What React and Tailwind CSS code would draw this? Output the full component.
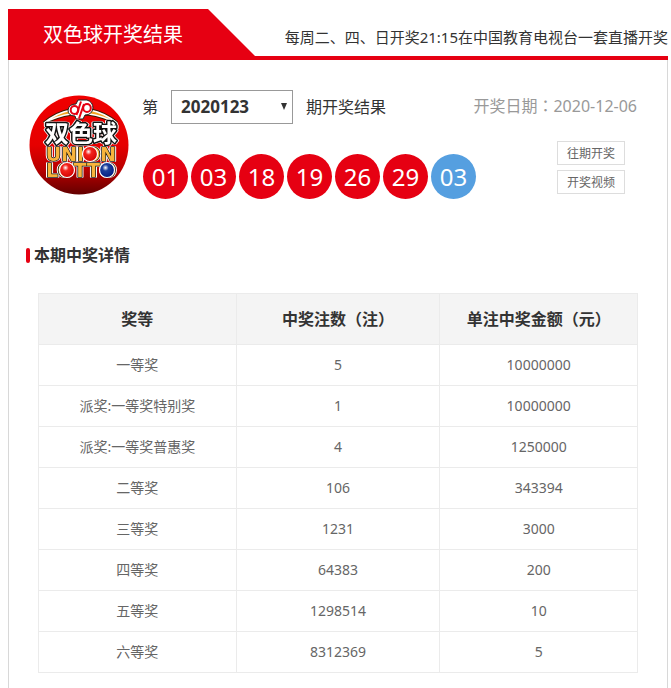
import React, { useState } from 'react';

const issues = ['2020123', '2020122', '2020121', '2020120'];
const redBalls = ['01', '03', '18', '19', '26', '29'];
const blueBall = '03';

const prizes = [
    { level: '一等奖', count: 5, amount: 10000000 },
    { level: '派奖:一等奖特别奖', count: 1, amount: 10000000 },
    { level: '派奖:一等奖普惠奖', count: 4, amount: 1250000 },
    { level: '二等奖', count: 106, amount: 343394 },
    { level: '三等奖', count: 1231, amount: 3000 },
    { level: '四等奖', count: 64383, amount: 200 },
    { level: '五等奖', count: 1298514, amount: 10 },
    { level: '六等奖', count: 8312369, amount: 5 },
];

const LottoLogo = () => (
    <svg viewBox="0 0 100 100" className="h-[100px] w-[100px] shrink-0" role="img" aria-label="双色球">
        <defs>
            <linearGradient id="disc" x1="0" y1="0" x2="0" y2="1">
                <stop offset="0" stopColor="#f00000" />
                <stop offset="0.5" stopColor="#e60000" />
                <stop offset="0.75" stopColor="#b80000" />
                <stop offset="1" stopColor="#640000" />
            </linearGradient>
            <radialGradient id="redBall" cx="0.4" cy="0.35" r="0.7">
                <stop offset="0" stopColor="#ffffff" />
                <stop offset="0.3" stopColor="#f4231c" />
                <stop offset="1" stopColor="#d00000" />
            </radialGradient>
            <radialGradient id="blueBall" cx="0.4" cy="0.35" r="0.7">
                <stop offset="0" stopColor="#ffffff" />
                <stop offset="0.3" stopColor="#1c3f9c" />
                <stop offset="1" stopColor="#001a7e" />
            </radialGradient>
        </defs>
        <circle cx="50" cy="50" r="49.5" fill="url(#disc)" />

        {/* arch */}
        <path d="M15 28 Q27 18 42 15 L61 15 Q76 18 88 28 Q74 21 60 19 L42 19 Q28 21 15 28Z" fill="#f5a623" stroke="#3a1a00" strokeWidth="3.5" />
        <path d="M15 28 Q27 18 42 15 L61 15 Q76 18 88 28 Q74 21 60 19 L42 19 Q28 21 15 28Z" fill="#f5a623" stroke="#fff" strokeWidth="1.6" />

        {/* emblem */}
        <path d="M49 5 H58 Q64 7 64 13 Q63 20 56 20 L54 24 H47 L46 21 Q39 21 39 15 Q40 9 47 9Z" fill="#fff" stroke="#222" strokeWidth="1" />
        <g fill="none" stroke="#e60012" strokeWidth="2">
            <path d="M52 6.5 L47.500 20 M55 9 L50 23.500" />
            <ellipse cx="45.5" cy="15" rx="3.8" ry="4" />
            <ellipse cx="58" cy="13" rx="3.800" ry="4" />
        </g>

        {/* lettering with a white rim around the dark outline */}
        <g
            fontWeight="700"
            textAnchor="middle"
            strokeLinejoin="round"
            stroke="#111"
            className="[filter:drop-shadow(1px_0_0_#fff)_drop-shadow(-1px_0_0_#fff)]"
        >
            <text x="52" y="47" fontSize="24" fontFamily="Noto Sans CJK SC, sans-serif" fill="#fff" strokeWidth="3" paintOrder="stroke">双色球</text>
            <g fontSize="19" fontFamily="DejaVu Sans, sans-serif" fill="#f7b43c" strokeWidth="1.5" paintOrder="stroke">
                <text x="52" y="66">UNION</text>
                <text x="52" y="82">LOTTO</text>
            </g>
        </g>
        <g stroke="#fff" strokeWidth="1.2">
            <circle cx="61" cy="59" r="7.5" fill="url(#redBall)" />
            <circle cx="38" cy="75" r="7.5" fill="url(#redBall)" />
            <circle cx="78" cy="75" r="7.5" fill="url(#blueBall)" />
        </g>
    </svg>
);

const Ball = ({ value, blue }) => (
    <li className={`flex h-[45px] w-[45px] items-center justify-center rounded-full text-2xl text-white ${blue ? 'bg-[#559fe0]' : 'bg-[#e60012]'}`}>
        {value}
    </li>
);

const App = () => {
    const [issue, setIssue] = useState(issues[0]);

    return (
        <div className="min-h-screen bg-white pt-[9px] pr-[3px] pl-2 font-['Noto_Sans','Noto_Sans_CJK_SC',sans-serif] text-[#333]">
            <header className="flex h-[51px] items-stretch border-b-4 border-[#e60012]">
                <h1 className="w-[247px] shrink-0 bg-[#e60012] pt-3 pl-[35px] text-xl leading-7 text-white [clip-path:polygon(0_0,200px_0,100%_100%,0_100%)]">
                    双色球开奖结果
                </h1>
                <p className="ml-auto pt-[18px] text-[15px] leading-5 whitespace-nowrap">
                    每周二、四、日开奖21:15在中国教育电视台一套直播开奖
                </p>
            </header>

            <main className="min-h-[calc(100vh-60px)] border-x border-[#d8d8d8] pt-[30px] pb-4">
                <section className="flex pr-[30px] pl-5">
                    <div className="pt-[5px]">
                        <LottoLogo />
                    </div>
                    <div className="ml-[13px] flex-1">
                        <div className="flex h-[34px] items-center">
                            <label htmlFor="issue">第</label>
                            <div className="relative mx-[13px]">
                                <select
                                    id="issue"
                                    value={issue}
                                    onChange={e => setIssue(e.target.value)}
                                    className="h-[34px] w-[122px] appearance-none border border-[#999] bg-white pl-[9px] text-[17px] font-bold"
                                >
                                    {issues.map(item => (
                                        <option key={item} value={item}>{item}</option>
                                    ))}
                                </select>
                                <span className="pointer-events-none absolute top-[13px] right-[6px] h-[7px] w-[6px] bg-[#333] [clip-path:polygon(0_0,100%_0,50%_100%)]"></span>
                            </div>
                            <span>期开奖结果</span>
                            <p className="ml-auto pb-1 whitespace-nowrap text-[#999]">
                                开奖日期<span className="font-['Noto_Sans_CJK_TC',sans-serif]">：</span>2020-12-06
                            </p>
                        </div>
                        <div className="mt-[17px] flex items-start justify-between">
                            <ul className="mt-[13px] ml-px flex gap-[3px]">
                                {redBalls.map(n => <Ball key={n} value={n} />)}
                                <Ball value={blueBall} blue />
                            </ul>
                            <div className="mr-3 flex flex-col gap-[5px] text-xs text-[#666]">
                                <a href="#history" className="flex h-6 w-[68px] items-center justify-center border border-[#ddd] pt-px">往期开奖</a>
                                <a href="#video" className="flex h-6 w-[68px] items-center justify-center border border-[#ddd] pt-px">开奖视频</a>
                            </div>
                        </div>
                    </div>
                </section>

                <section className="mt-11 px-[29px]">
                    <h2 className="-ml-3 flex items-center gap-1 text-base leading-6 font-bold">
                        <span className="h-[15px] w-1 rounded-sm bg-[#e60012]"></span>
                        本期中奖详情
                    </h2>
                    <table className="mt-[26px] w-full table-fixed border-collapse text-center">
                        <thead>
                            <tr className="h-[51px] bg-[#f4f4f4] text-base">
                                <th className="w-[33%] border border-[#ebebeb]">奖等</th>
                                <th className="w-[34%] border border-[#ebebeb]">中奖注数（注）</th>
                                <th className="w-[33%] border border-[#ebebeb]">单注中奖金额（元）</th>
                            </tr>
                        </thead>
                        <tbody className="text-sm text-[#666]">
                            {prizes.map(prize => (
                                <tr key={prize.level} className="h-[41px]">
                                    <td className="border border-[#ebebeb]">{prize.level}</td>
                                    <td className="border border-[#ebebeb]">{prize.count}</td>
                                    <td className="border border-[#ebebeb]">{prize.amount}</td>
                                </tr>
                            ))}
                        </tbody>
                    </table>
                </section>
            </main>
        </div>
    );
};

export default App;
